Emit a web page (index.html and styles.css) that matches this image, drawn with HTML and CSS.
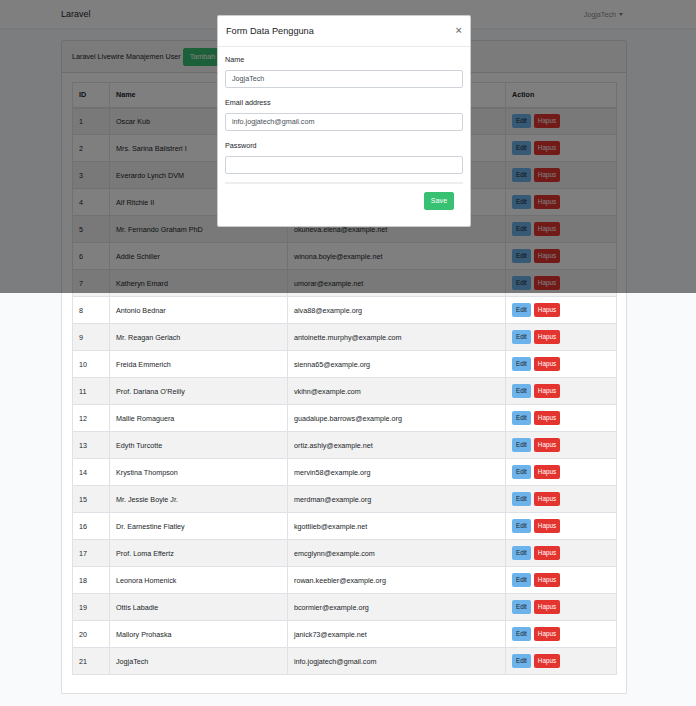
FILE: index.html
```html
<!DOCTYPE html>
<html lang="id">
<head>
<meta charset="utf-8">
<title>Laravel</title>
<link rel="stylesheet" href="styles.css">
</head>
<body>
<nav class="navbar">
  <div class="container nav-inner">
    <span class="brand">Laravel</span>
    <span class="user">JogjaTech <span class="caret"></span></span>
  </div>
</nav>
<main class="container main">
  <div class="card">
    <div class="card-header">
      <span>Laravel Livewire Manajemen User</span>
      <button class="btn btn-success">Tambah Data</button>
    </div>
    <div class="card-body">
      <table class="table">
        <colgroup><col class="c-id"><col class="c-name"><col class="c-email"><col class="c-act"></colgroup>
        <thead>
          <tr><th>ID</th><th>Name</th><th>Email</th><th>Action</th></tr>
        </thead>
        <tbody>
          <tr><td>1</td><td>Oscar Kub</td><td>kub.oscar@example.com</td><td><div class="acts"><span class="b-edit">Edit</span><span class="b-del">Hapus</span></div></td></tr>
          <tr><td>2</td><td>Mrs. Sarina Balistreri I</td><td>sarina.balistreri@example.org</td><td><div class="acts"><span class="b-edit">Edit</span><span class="b-del">Hapus</span></div></td></tr>
          <tr><td>3</td><td>Everardo Lynch DVM</td><td>elynch@example.net</td><td><div class="acts"><span class="b-edit">Edit</span><span class="b-del">Hapus</span></div></td></tr>
          <tr><td>4</td><td>Alf Ritchie II</td><td>ritchie.alf@example.com</td><td><div class="acts"><span class="b-edit">Edit</span><span class="b-del">Hapus</span></div></td></tr>
          <tr><td>5</td><td>Mr. Fernando Graham PhD</td><td>okuneva.elena@example.net</td><td><div class="acts"><span class="b-edit">Edit</span><span class="b-del">Hapus</span></div></td></tr>
          <tr><td>6</td><td>Addie Schiller</td><td>winona.boyle@example.net</td><td><div class="acts"><span class="b-edit">Edit</span><span class="b-del">Hapus</span></div></td></tr>
          <tr><td>7</td><td>Katheryn Emard</td><td>umorar@example.net</td><td><div class="acts"><span class="b-edit">Edit</span><span class="b-del">Hapus</span></div></td></tr>
          <tr><td>8</td><td>Antonio Bednar</td><td>alva88@example.org</td><td><div class="acts"><span class="b-edit">Edit</span><span class="b-del">Hapus</span></div></td></tr>
          <tr><td>9</td><td>Mr. Reagan Gerlach</td><td>antoinette.murphy@example.com</td><td><div class="acts"><span class="b-edit">Edit</span><span class="b-del">Hapus</span></div></td></tr>
          <tr><td>10</td><td>Freida Emmerich</td><td>sienna65@example.org</td><td><div class="acts"><span class="b-edit">Edit</span><span class="b-del">Hapus</span></div></td></tr>
          <tr><td>11</td><td>Prof. Dariana O'Reilly</td><td>vkihn@example.com</td><td><div class="acts"><span class="b-edit">Edit</span><span class="b-del">Hapus</span></div></td></tr>
          <tr><td>12</td><td>Mallie Romaguera</td><td>guadalupe.barrows@example.org</td><td><div class="acts"><span class="b-edit">Edit</span><span class="b-del">Hapus</span></div></td></tr>
          <tr><td>13</td><td>Edyth Turcotte</td><td>ortiz.ashly@example.net</td><td><div class="acts"><span class="b-edit">Edit</span><span class="b-del">Hapus</span></div></td></tr>
          <tr><td>14</td><td>Krystina Thompson</td><td>mervin58@example.org</td><td><div class="acts"><span class="b-edit">Edit</span><span class="b-del">Hapus</span></div></td></tr>
          <tr><td>15</td><td>Mr. Jessie Boyle Jr.</td><td>merdman@example.org</td><td><div class="acts"><span class="b-edit">Edit</span><span class="b-del">Hapus</span></div></td></tr>
          <tr><td>16</td><td>Dr. Earnestine Flatley</td><td>kgottlieb@example.net</td><td><div class="acts"><span class="b-edit">Edit</span><span class="b-del">Hapus</span></div></td></tr>
          <tr><td>17</td><td>Prof. Loma Effertz</td><td>emcglynn@example.com</td><td><div class="acts"><span class="b-edit">Edit</span><span class="b-del">Hapus</span></div></td></tr>
          <tr><td>18</td><td>Leonora Homenick</td><td>rowan.keebler@example.org</td><td><div class="acts"><span class="b-edit">Edit</span><span class="b-del">Hapus</span></div></td></tr>
          <tr><td>19</td><td>Ottis Labadie</td><td>bcormier@example.org</td><td><div class="acts"><span class="b-edit">Edit</span><span class="b-del">Hapus</span></div></td></tr>
          <tr><td>20</td><td>Mallory Prohaska</td><td>janick73@example.net</td><td><div class="acts"><span class="b-edit">Edit</span><span class="b-del">Hapus</span></div></td></tr>
          <tr><td>21</td><td>JogjaTech</td><td>info.jogjatech@gmail.com</td><td><div class="acts"><span class="b-edit">Edit</span><span class="b-del">Hapus</span></div></td></tr>
        </tbody>
      </table>
    </div>
  </div>
</main>

<div class="backdrop"></div>
<div class="modal">
  <div class="modal-header">
    <span class="modal-title">Form Data Pengguna</span>
    <span class="close">&times;</span>
  </div>
  <div class="modal-body">
    <div class="form-group">
      <label>Name</label>
      <div class="input">JogjaTech</div>
    </div>
    <div class="form-group">
      <label>Email address</label>
      <div class="input">info.jogjatech@gmail.com</div>
    </div>
    <div class="form-group last">
      <label>Password</label>
      <div class="input"></div>
    </div>
    <div class="divider"></div>
    <div class="modal-footer">
      <button class="btn btn-save">Save</button>
    </div>
  </div>
</div>
</body>
</html>
```
FILE: styles.css
```css
* { box-sizing: border-box; }
html, body { margin: 0; padding: 0; }
body {
  background: #f8fafc;
  font-family: "Liberation Sans", Arial, sans-serif;
  font-size: 7.2px;
  color: #212529;
  position: relative;
  min-height: 706px;
}
.container { margin-left: 61px; width: 566px; }

.navbar {
  background: #fff;
  height: 28px;
  box-shadow: 0 1px 2px rgba(0,0,0,0.06);
}
.nav-inner {
  height: 28px;
  display: flex;
  align-items: center;
  justify-content: space-between;
}
.brand { font-size: 9px; color: #212529; }
.user { color: rgba(0,0,0,0.5); font-size: 7.2px; padding-right: 4px; display: flex; align-items: center; gap: 3px; }
.caret {
  display: inline-block;
  width: 0; height: 0;
  border-left: 2.5px solid transparent;
  border-right: 2.5px solid transparent;
  border-top: 3px solid rgba(0,0,0,0.5);
}

.main { padding-top: 12px; padding-bottom: 13px; }
.card {
  background: #fff;
  border: 1px solid rgba(0,0,0,0.125);
  border-radius: 2px;
}
.card-header {
  height: 32px;
  padding: 0 10px;
  background: #f7f7f7;
  border-bottom: 1px solid rgba(0,0,0,0.125);
  display: flex;
  align-items: center;
  gap: 2px;
}
.btn {
  font-family: inherit;
  font-size: 7.2px;
  border: 1px solid transparent;
  border-radius: 2px;
  padding: 0 6px;
  height: 18px;
  line-height: 16px;
  color: #fff;
  cursor: pointer;
}
.btn-success { background: #38c172; border-color: #38c172; }

.card-body { padding: 9px 10px 18px; }
.table {
  width: 544px;
  border-collapse: collapse;
  table-layout: fixed;
  border: 1px solid #dee2e6;
}
.c-id { width: 37px; }
.c-name { width: 178px; }
.c-email { width: 218px; }
.c-act { width: 111px; }
.table th, .table td {
  border: 1px solid #dee2e6;
  padding: 0 6px;
  text-align: left;
  vertical-align: middle;
  white-space: nowrap;
  overflow: hidden;
}
.table th { height: 25px; font-weight: bold; border-bottom-width: 2px; }
.table td { height: 27px; }
.table tbody tr:nth-child(odd) { background: #f2f2f2; }
.acts { display: flex; gap: 3px; }
.b-edit, .b-del {
  display: inline-block;
  font-size: 6.3px;
  height: 14px;
  line-height: 14px;
  padding: 0 4px;
  border-radius: 2px;
}
.b-edit { background: #6cb2eb; color: #212529; }
.b-del { background: #e3342f; color: #fff; }

.backdrop {
  position: absolute;
  left: 0; top: 0;
  width: 100%;
  height: 293px;
  background: rgba(0,0,0,0.5);
}
.modal {
  position: absolute;
  left: 217px; top: 15px;
  width: 254px;
  background: #fff;
  border: 1px solid rgba(0,0,0,0.2);
  border-radius: 2px;
}
.modal-header {
  height: 31px;
  padding: 0 8px;
  border-bottom: 1px solid #e9ecef;
  display: flex;
  align-items: center;
  justify-content: space-between;
}
.modal-title { font-size: 9.2px; color: #212529; }
.close { font-size: 11px; font-weight: bold; color: rgba(0,0,0,0.5); margin-top: -3px; }
.modal-body { padding: 8px 7px 16px; }
.form-group { margin-bottom: 10px; }
.form-group.last { margin-bottom: 8px; }
.form-group label { display: block; height: 10px; line-height: 10px; margin-bottom: 5px; }
.input {
  height: 18px;
  border: 1px solid #ced4da;
  border-radius: 2px;
  padding: 0 6px;
  line-height: 16px;
  color: #495057;
}
.divider { height: 2px; background: #eeeeee; }
.modal-footer { display: flex; justify-content: flex-end; padding-top: 8px; padding-right: 9px; }
.btn-save { background: #38c172; border-color: #38c172; width: 30px; padding: 0; }
```
